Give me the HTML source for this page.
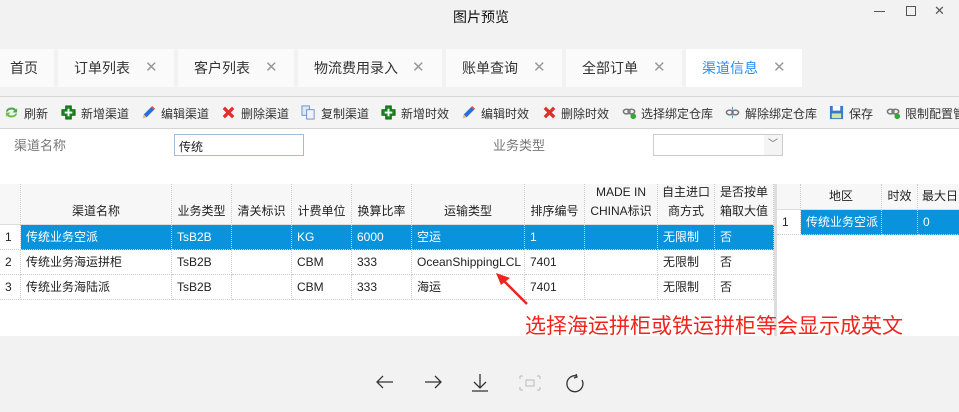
<!DOCTYPE html>
<html><head><meta charset="utf-8"><style>
*{margin:0;padding:0;box-sizing:border-box}
body{width:959px;height:412px;overflow:hidden;background:#f2f2f3;font-family:"Liberation Sans","Noto Sans CJK SC",sans-serif;font-size:12px;color:#222;position:relative}
.abs{position:absolute}
.tab{position:absolute;top:49px;height:38px;background:#fafafa;line-height:38px;font-size:14px;color:#333}
.tab .x{position:absolute;color:#999;font-size:15px}
#content{position:absolute;left:0;top:96px;width:959px;height:240px;background:#fff;border-top:1px solid #d6d6d6}
#tb{position:absolute;left:0;top:0;width:959px;height:32px;background:#f4f4f4;border-bottom:1px solid #d4d4d4;white-space:nowrap}
#tb span{position:absolute;top:8px;font-size:12px;color:#333}
.ic{position:absolute;top:8px;width:15px;height:15px}
.g{position:absolute;font-size:13px}
.c{position:absolute;height:25px;line-height:25px;border-right:1px dotted #ccc;border-bottom:1px dotted #ccc;padding-left:5px;white-space:nowrap;overflow:hidden;font-size:12px}
.h{position:absolute;border-right:1px dotted #ccc;border-bottom:1px solid #ddd;background:#f7f7f7;text-align:center;font-size:12px;line-height:19px;display:flex;align-items:flex-end;justify-content:center;padding-bottom:3px}
.sel{background:#0a93dd;color:#fff}
</style></head><body>
<div class="abs" style="left:453px;top:7px;font-size:14px;color:#111">图片预览</div>
<div class="abs" style="left:874px;top:11px;width:11px;height:1px;background:#555"></div>
<div class="abs" style="left:906px;top:6px;width:10px;height:10px;border:1px solid #555"></div>
<div class="abs" style="left:934px;top:3px;font-size:13px;color:#555">✕</div>

<div class="tab" style="left:0;width:54px;padding-left:10px">首页</div>
<div class="tab" style="left:58px;width:116px;padding-left:16px">订单列表<span class="x" style="left:87px">✕</span></div>
<div class="tab" style="left:178px;width:116px;padding-left:16px">客户列表<span class="x" style="left:87px">✕</span></div>
<div class="tab" style="left:298px;width:144px;padding-left:16px">物流费用录入<span class="x" style="left:114px">✕</span></div>
<div class="tab" style="left:446px;width:116px;padding-left:16px">账单查询<span class="x" style="left:87px">✕</span></div>
<div class="tab" style="left:566px;width:116px;padding-left:16px">全部订单<span class="x" style="left:87px">✕</span></div>
<div class="tab" style="left:686px;width:116px;padding-left:16px;background:#fff;color:#2d8cf0">渠道信息<span class="x" style="left:87px">✕</span></div>

<div id="content">
<div id="tb">
<svg class="ic" style="left:4px" viewBox="0 0 16 16"><path d="M2 7a6 5 0 0 1 11-2l1-2v5h-5l2-2a4 3 0 0 0-7 1z" fill="#4aa84a"/><path d="M14 9a6 5 0 0 1-11 2l-1 2V8h5l-2 2a4 3 0 0 0 7-1z" fill="#6cbf4f"/></svg><span style="left:24px">刷新</span>
<svg class="ic" style="left:61px" viewBox="0 0 16 16"><path d="M5 1h6v4h4v6h-4v4H5v-4H1V5h4z" fill="#1a8a1a" stroke="#0b5d0b"/><path d="M7 4h2v3h3v2H9v3H7V9H4V7h3z" fill="#fff"/></svg><span style="left:81px">新增渠道</span>
<svg class="ic" style="left:141px" viewBox="0 0 16 16"><path d="M2 14l1-4 8-8 3 3-8 8z" fill="#2a6fd6"/><path d="M11 2l3 3 1-1-3-3z" fill="#e44"/><path d="M2 14l1-4 3 3z" fill="#f0c070"/></svg><span style="left:161px">编辑渠道</span>
<svg class="ic" style="left:221px" viewBox="0 0 16 16"><path d="M3 3l10 10M13 3L3 13" stroke="#e0302a" stroke-width="3.5"/></svg><span style="left:241px">删除渠道</span>
<svg class="ic" style="left:301px" viewBox="0 0 16 16"><rect x="1" y="1" width="8" height="10" fill="#dde8f6" stroke="#6d8fc4"/><rect x="6" y="5" width="8" height="10" fill="#eef3fa" stroke="#6d8fc4"/></svg><span style="left:321px">复制渠道</span>
<svg class="ic" style="left:381px" viewBox="0 0 16 16"><path d="M5 1h6v4h4v6h-4v4H5v-4H1V5h4z" fill="#1a8a1a" stroke="#0b5d0b"/><path d="M7 4h2v3h3v2H9v3H7V9H4V7h3z" fill="#fff"/></svg><span style="left:401px">新增时效</span>
<svg class="ic" style="left:461px" viewBox="0 0 16 16"><path d="M2 14l1-4 8-8 3 3-8 8z" fill="#2a6fd6"/><path d="M11 2l3 3 1-1-3-3z" fill="#e44"/><path d="M2 14l1-4 3 3z" fill="#f0c070"/></svg><span style="left:481px">编辑时效</span>
<svg class="ic" style="left:542px" viewBox="0 0 16 16"><path d="M3 3l10 10M13 3L3 13" stroke="#e0302a" stroke-width="3.5"/></svg><span style="left:561px">删除时效</span>
<svg class="ic" style="left:622px" viewBox="0 0 16 16"><ellipse cx="5" cy="7" rx="3.5" ry="2.5" fill="none" stroke="#777" stroke-width="1.6"/><ellipse cx="10" cy="7" rx="3.5" ry="2.5" fill="none" stroke="#777" stroke-width="1.6"/><circle cx="12" cy="12" r="3" fill="#3a3"/></svg><span style="left:641px">选择绑定仓库</span>
<svg class="ic" style="left:725px" viewBox="0 0 16 16"><ellipse cx="5" cy="8" rx="3.5" ry="2.5" fill="none" stroke="#777" stroke-width="1.6"/><ellipse cx="11" cy="8" rx="3.5" ry="2.5" fill="none" stroke="#777" stroke-width="1.6"/><path d="M8 2v3M8 11v3" stroke="#48c"/></svg><span style="left:745px">解除绑定仓库</span>
<svg class="ic" style="left:829px" viewBox="0 0 16 16"><rect x="1" y="1" width="14" height="14" fill="#3b78c9"/><rect x="4" y="1" width="8" height="5" fill="#fff"/><rect x="3" y="9" width="10" height="5" fill="#cfe6a8"/></svg><span style="left:849px">保存</span>
<svg class="ic" style="left:886px" viewBox="0 0 16 16"><ellipse cx="5" cy="7" rx="3.5" ry="2.5" fill="none" stroke="#777" stroke-width="1.6"/><ellipse cx="10" cy="7" rx="3.5" ry="2.5" fill="none" stroke="#777" stroke-width="1.6"/><circle cx="12" cy="12" r="3" fill="#3a3"/></svg><span style="left:905px">限制配置管</span>
</div>
<div class="g" style="left:14px;top:38px;color:#777;font-size:13px">渠道名称</div>
<div class="abs" style="left:174px;top:37px;width:130px;height:22px;border:1px solid #a6bcd6;padding:3px 4px;font-size:12px">传统</div>
<div class="g" style="left:493px;top:38px;color:#777;font-size:13px">业务类型</div>
<div class="abs" style="left:653px;top:37px;width:130px;height:22px;border:1px solid #ccc"><div class="abs" style="right:0;top:0;width:18px;height:20px;background:#f4f4f4;color:#666;font-size:10px;text-align:center;line-height:20px">﹀</div></div>
<div class="abs" style="left:0;top:87px;width:959px;height:1px;background:#ddd"></div>
</div>

<div id="grid" class="abs" style="left:0;top:184px">
<div class="h" style="left:0;top:0;width:21px;height:41px"></div>
<div class="h" style="left:21px;width:151px;height:41px">渠道名称</div>
<div class="h" style="left:172px;width:60px;height:41px">业务类型</div>
<div class="h" style="left:232px;width:60px;height:41px">清关标识</div>
<div class="h" style="left:292px;width:60px;height:41px">计费单位</div>
<div class="h" style="left:352px;width:60px;height:41px">换算比率</div>
<div class="h" style="left:412px;width:113px;height:41px">运输类型</div>
<div class="h" style="left:525px;width:60px;height:41px">排序编号</div>
<div class="h" style="left:585px;width:73px;height:41px">MADE IN<br>CHINA标识</div>
<div class="h" style="left:658px;width:57px;height:41px">自主进口<br>商方式</div>
<div class="h" style="left:715px;width:59px;height:41px">是否按单<br>箱取大值</div>
</div>

<div class="abs" style="left:0;top:225px">
<div class="c" style="left:0;top:0;width:21px;background:#fff">1</div>
<div class="c sel" style="left:21px;top:0;width:151px">传统业务空派</div><div class="c sel" style="left:172px;top:0;width:60px">TsB2B</div><div class="c sel" style="left:232px;top:0;width:60px"></div><div class="c sel" style="left:292px;top:0;width:60px">KG</div><div class="c sel" style="left:352px;top:0;width:60px">6000</div><div class="c sel" style="left:412px;top:0;width:113px">空运</div><div class="c sel" style="left:525px;top:0;width:60px">1</div><div class="c sel" style="left:585px;top:0;width:73px"></div><div class="c sel" style="left:658px;top:0;width:57px">无限制</div><div class="c sel" style="left:715px;top:0;width:59px">否</div>
<div class="c" style="left:0;top:25px;width:21px">2</div>
<div class="c" style="left:21px;top:25px;width:151px">传统业务海运拼柜</div><div class="c" style="left:172px;top:25px;width:60px">TsB2B</div><div class="c" style="left:232px;top:25px;width:60px"></div><div class="c" style="left:292px;top:25px;width:60px">CBM</div><div class="c" style="left:352px;top:25px;width:60px">333</div><div class="c" style="left:412px;top:25px;width:113px">OceanShippingLCL</div><div class="c" style="left:525px;top:25px;width:60px">7401</div><div class="c" style="left:585px;top:25px;width:73px"></div><div class="c" style="left:658px;top:25px;width:57px">无限制</div><div class="c" style="left:715px;top:25px;width:59px">否</div>
<div class="c" style="left:0;top:50px;width:21px">3</div>
<div class="c" style="left:21px;top:50px;width:151px">传统业务海陆派</div><div class="c" style="left:172px;top:50px;width:60px">TsB2B</div><div class="c" style="left:232px;top:50px;width:60px"></div><div class="c" style="left:292px;top:50px;width:60px">CBM</div><div class="c" style="left:352px;top:50px;width:60px">333</div><div class="c" style="left:412px;top:50px;width:113px">海运</div><div class="c" style="left:525px;top:50px;width:60px">7401</div><div class="c" style="left:585px;top:50px;width:73px"></div><div class="c" style="left:658px;top:50px;width:57px">无限制</div><div class="c" style="left:715px;top:50px;width:59px">否</div>
</div>

<div class="abs" style="left:774px;top:184px;width:3px;height:152px;background:#ddd"></div>
<div class="abs" style="left:777px;top:184px">
<div class="h" style="left:0;top:0;width:24px;height:26px"></div>
<div class="h" style="left:24px;width:81px;height:26px">地区</div>
<div class="h" style="left:105px;width:36px;height:26px">时效</div>
<div class="h" style="left:141px;width:50px;height:26px;justify-content:flex-start;padding-left:4px">最大日</div>
<div class="c" style="left:0;top:26px;width:24px">1</div>
<div class="c sel" style="left:24px;top:26px;width:81px">传统业务空派</div><div class="c sel" style="left:105px;top:26px;width:36px"></div><div class="c sel" style="left:141px;top:26px;width:50px">0</div>
</div>

<svg class="abs" style="left:495px;top:272px" width="40" height="45" viewBox="0 0 40 45"><path d="M4 4L32 32" stroke="#f0241c" stroke-width="2.5"/><path d="M1 1l14 5-9 7z" fill="#f0241c"/></svg>
<div class="abs" style="left:525px;top:310px;font-size:21px;color:#f0241c;font-family:'Noto Sans CJK SC',sans-serif;white-space:nowrap">选择海运拼柜或铁运拼柜等会显示成英文</div>

<svg class="abs" style="left:370px;top:368px" width="220" height="30" viewBox="0 0 220 30">
<g stroke="#333" stroke-width="1.3" fill="none"><path d="M7 14h16M13 8l-6 6 6 6"/><path d="M55 14h16M65 8l6 6-6 6"/><path d="M110 6v14M104 14l6 6 6-6M102 23h16"/><path d="M212 12a8 8 0 1 1-5-4M206 6l1 3-3 1"/></g>
<g stroke="#bbb" stroke-width="1" fill="none"><path d="M150 8h3M150 8v3M170 8h-3M170 8v3M150 22h3M150 22v-3M170 22h-3M170 22v-3"/><rect x="156" y="12" width="8" height="6"/></g>
</svg>
</body></html>
